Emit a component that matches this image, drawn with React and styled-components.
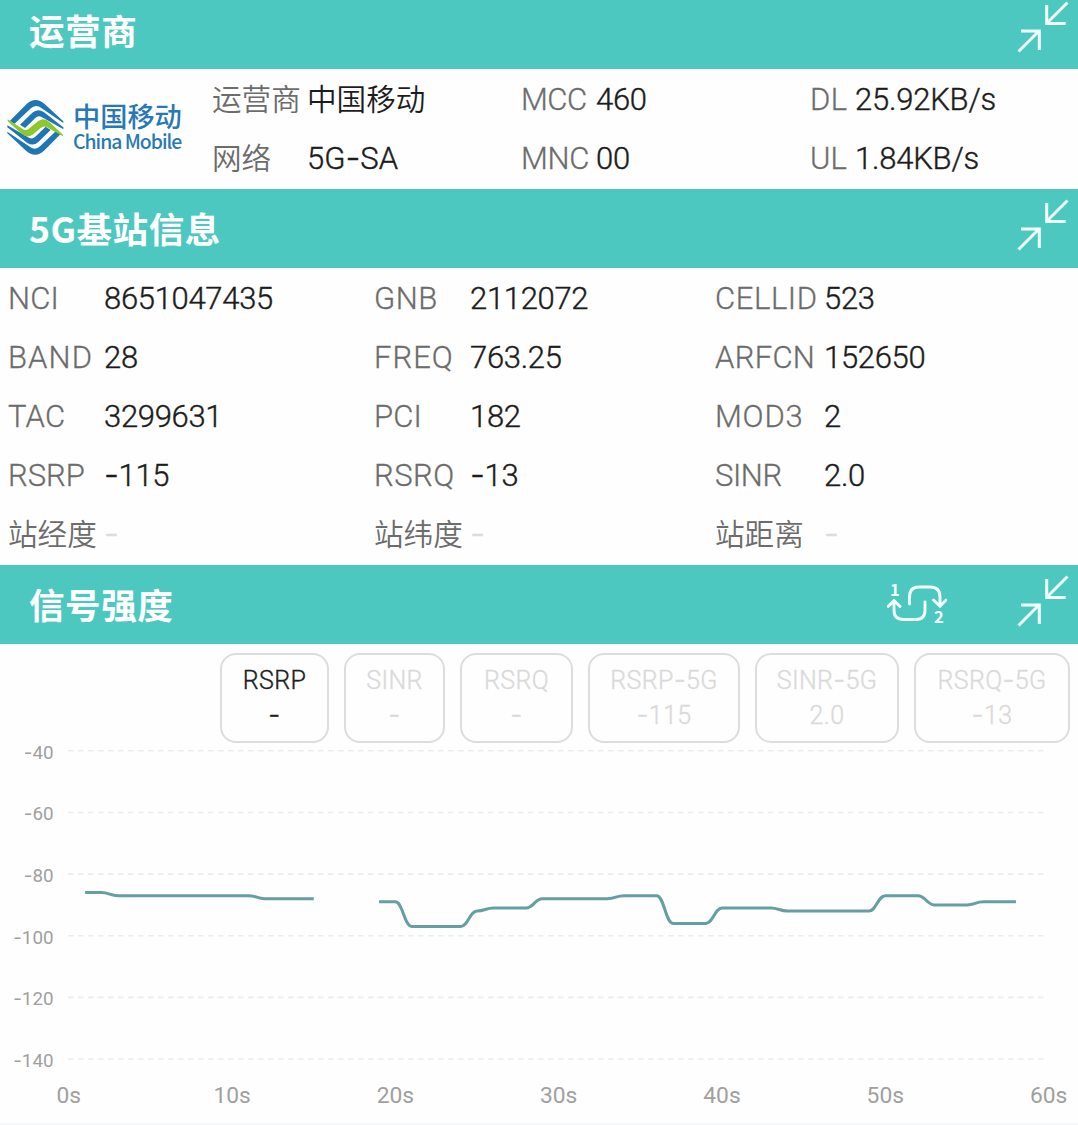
import React from "react";
import styled, { createGlobalStyle } from "styled-components";

const GlobalStyle = createGlobalStyle`
  * { box-sizing: border-box; }
  body {
    margin: 0;
    background: #fff;
    font-family: Roboto, "Noto Sans CJK SC", "Noto Sans", sans-serif;
    font-weight: 350;
    overflow: hidden;
  }
`;

const Page = styled.main`
  width: 1078px;
  height: 1125px;
  overflow: hidden;
  background: #fefefe;
`;

const Header = styled.header`
  display: flex;
  align-items: center;
  height: 78.5px;
  margin-top: ${(p) => (p.$cropped ? "-9.5px" : "0")};
  padding: 0 8px 0 29px;
  background: #4dc8c1;
  color: #fff;
`;

const Title = styled.h2`
  flex: 1;
  margin: 0;
  font-family: "Noto Sans CJK SC", sans-serif;
  font-size: 35.6px;
  line-height: 77px;
  height: 78px;
  font-weight: 700;
  letter-spacing: 0.5px;
`;

const IconButton = styled.button`
  display: flex;
  padding: 0 0 ${(p) => p.$lift}px;
  border: 0;
  background: none;
  color: #f2ffff;
  margin-left: ${(p) => p.$gap || 0}px;
`;

const CarrierPanel = styled.section`
  display: grid;
  grid-template-columns: 211px 309px 289px 1fr;
  height: 120px;
`;

const LogoBox = styled.div`
  display: flex;
  align-items: center;
  padding: 0 0 4px 4px;
`;

const LogoText = styled.div`
  display: flex;
  flex-direction: column;
  margin-left: 7px;
  padding-top: 3px;
  color: #2878b4;
  white-space: nowrap;
  font-family: "Noto Sans CJK SC", sans-serif;
`;

const LogoChinese = styled.span`
  font-size: 27.2px;
  line-height: 25px;
  font-weight: 500;
`;

const LogoEnglish = styled.span`
  font-size: 19.4px;
  line-height: 26px;
  font-weight: 500;
  letter-spacing: -1px;
`;

const Column = styled.dl`
  margin: 0;
`;

const Field = styled.div`
  display: flex;
  height: 59px;
  white-space: nowrap;
`;

const Label = styled.dt`
  width: ${(p) => p.$width}px;
  color: #6c6c6c;
  font-size: ${(p) => (p.$han ? 29.6 : 31)}px;
  line-height: ${(p) => (p.$han ? 62 : 61)}px;
  font-weight: 350;
  letter-spacing: ${(p) => p.$track}px;
  padding-left: 1px;
  -webkit-text-stroke: ${(p) => (p.$han ? 0 : 0.3)}px currentColor;
`;

const Value = styled.dd`
  margin: 0;
  color: ${(p) => (p.$muted ? "#dcdcdc" : "#1c1c1c")};
  font-size: ${(p) => (p.$han ? 29.6 : 31)}px;
  line-height: ${(p) => (p.$han ? 62 : 61)}px;
  font-weight: 350;
  letter-spacing: ${(p) => p.$track}px;
  -webkit-text-stroke: ${(p) => (p.$han ? 0 : 0.4)}px currentColor;
`;

const Dash = styled.span`
  font-family: Inter, sans-serif;
  font-size: 1.06em;
  line-height: 1;
  font-weight: 350;
`;

const CellPanel = styled.section`
  display: grid;
  grid-template-columns: 366px 341px 1fr;
  height: 297.5px;
  padding-left: 7px;
`;

const Metrics = styled.div`
  display: flex;
  justify-content: flex-end;
  gap: 15px;
  height: 99.5px;
  padding: 9.5px 8px 0 0;
`;

const Metric = styled.button`
  display: flex;
  flex-direction: column;
  align-items: center;
  width: ${(p) => p.$width}px;
  height: 90px;
  padding: 7.5px 0 0;
  border: 2px solid #dcdddd;
  border-radius: 16px;
  background: #fefefe;
  color: ${(p) => (p.$active ? "#202020" : "#dadada")};
  font-family: inherit;
  font-weight: 350;
  font-size: 25px;
  line-height: 35px;
  letter-spacing: 0.35px;
  white-space: nowrap;
  -webkit-text-stroke: 0.35px currentColor;
`;

const Chart = styled.svg`
  display: block;
  font-weight: 400;
  fill: #a0a0a0;
`;

function Dashed({ children }) {
  return children
    .split(/(-)/)
    .filter(Boolean)
    .map((part, i) => (part === "-" ? <Dash key={i}>-</Dash> : part));
}

const hasHan = (text) => /[\u4e00-\u9fff]/.test(text);

function Fields({ width, items }) {
  return (
    <Column>
      {items.map(([label, value, labelTrack = 0.5, valueTrack = -0.3]) => (
        <Field key={label}>
          <Label $width={width} $han={hasHan(label)} $track={hasHan(label) ? 0 : labelTrack}>
            {label}
          </Label>
          <Value $muted={value === "-"} $han={hasHan(value)} $track={hasHan(value) ? 0 : valueTrack}>
            <Dashed>{value}</Dashed>
          </Value>
        </Field>
      ))}
    </Column>
  );
}

function CollapseIcon() {
  return (
    <svg width="54" height="54" viewBox="0 0 54 54" fill="none" stroke="currentColor" strokeWidth="3">
      <path d="M51.5 2.5 31 23M30.7 5v18.5h19M2.5 51.5 23 31M5 31H23.3V50" />
    </svg>
  );
}

function SwapIcon() {
  return (
    <svg width="60" height="46" viewBox="0 -2 60 46" fill="none" stroke="currentColor" strokeWidth="2.9" strokeLinecap="round">
      <path d="M22.5 21V14Q22.5 4 32 4H43Q53 4 53 14V21M46.5 17 53 23.2 59 17" />
      <path d="M38 19V27Q38 36.5 29 36.5H16.5Q7 36.5 7 27V18M1.2 23.5 7 17.5 13 23.5" />
      <g fill="currentColor" stroke="none" fontFamily="Noto Sans CJK SC, sans-serif" fontWeight="700" fontSize="16.5">
        <text x="3" y="13">1</text>
        <text x="47" y="39.5">2</text>
      </g>
    </svg>
  );
}

function LogoMark() {
  const bands = (
    <>
      <path d="M18 74 68 24Q94 0 122 24L178 76V81L113 37Q95 22 79 38L31 84Z" />
      <path d="M48 86 85 50Q101 36 119 48L178 94V100L113 63Q103 57 94 66L63 96Z" />
    </>
  );
  return (
    <svg width="62" height="62" viewBox="0 0 186 186">
      <g fill="#1f76b5">
        {bands}
        <g transform="rotate(180 94 94)">{bands}</g>
      </g>
      <path
        fill="#8dc82b"
        d="M11 70 60 101Q69 105 78 95L103 75Q120 63 136 78L177 116V121L128 93Q119 88 109 97L88 115Q70 127 53 113L11 76Z"
      />
    </svg>
  );
}

function SectionHeader({ title, cropped, children }) {
  return (
    <Header $cropped={cropped}>
      <Title>{title}</Title>
      {children}
      <IconButton aria-label="收起" $gap={children ? 69 : 0} $lift={6}>
        <CollapseIcon />
      </IconButton>
    </Header>
  );
}

const carrier = [["运营商", "中国移动"], ["网络", "5G-SA", 0, 0]];
const codes = [["MCC", "460", -0.5], ["MNC", "00", -0.3]];
const rates = [["DL", "25.92KB/s", 0.4, -0.2], ["UL", "1.84KB/s", 0, -0.2]];

const cellColumns = [
  { width: 97, items: [["NCI", "8651047435", 0.2], ["BAND", "28", 1.1], ["TAC", "3299631", 0.2], ["RSRP", "-115", 0], ["站经度", "-"]] },
  { width: 97, items: [["GNB", "2112072"], ["FREQ", "763.25", 1], ["PCI", "182", 0.2], ["RSRQ", "-13", 0.5], ["站纬度", "-"]] },
  { width: 110, items: [["CELLID", "523", 0.6], ["ARFCN", "152650", 0.3], ["MOD3", "2", 0.8], ["SINR", "2.0", -0.4], ["站距离", "-"]] },
];

const metrics = [
  ["RSRP", "-", 109, true],
  ["SINR", "-", 101],
  ["RSRQ", "-", 113],
  ["RSRP-5G", "-115", 152],
  ["SINR-5G", "2.0", 144],
  ["RSRQ-5G", "-13", 156],
];

const CHART_TOP = 743;
const xAt = (s) => 68.8 + s * 16.33;
const yAt = (db) => 750.8 - CHART_TOP - (db + 40) * 3.082;

const segments = [
  [[1, -86], [2, -86], [3, -87], [11, -87], [12, -88], [15, -88]],
  [
    [19, -89], [20, -89], [21, -97], [24, -97], [25, -92], [26, -91], [28, -91], [29, -88],
    [33, -88], [34, -87], [36, -87], [37, -96], [39, -96], [40, -91], [43, -91], [44, -92],
    [49, -92], [50, -87], [52, -87], [53, -90], [55, -90], [56, -89], [58, -89],
  ],
];

function smoothPath(points) {
  return points
    .map(([s, db], i) => {
      const x = xAt(s);
      const y = yAt(db);
      if (i === 0) return `M${x} ${y}`;
      const px = xAt(points[i - 1][0]);
      const py = yAt(points[i - 1][1]);
      const dx = Math.min(x - px, 16.33) * 0.45;
      return `C${px + dx} ${py} ${x - dx} ${y} ${x} ${y}`;
    })
    .join("");
}

function SignalChart() {
  return (
    <Chart width="1078" height="382" viewBox="0 0 1078 382">
      {[-40, -60, -80, -100, -120, -140].map((db) => (
        <g key={db}>
          <line x1="68" x2="1045" y1={yAt(db)} y2={yAt(db)} stroke="#ececec" strokeWidth="1.6" strokeDasharray="5.5 4.5" />
          <text x="53.5" y={yAt(db) + 8} textAnchor="end" fontSize="18.8">
            <tspan fontFamily="Inter, sans-serif">-</tspan>
            {-db}
          </text>
        </g>
      ))}
      {[0, 10, 20, 30, 40, 50, 60].map((s) => (
        <text key={s} x={xAt(s)} y="360" textAnchor="middle" fontSize="22.8">{s}s</text>
      ))}
      {segments.map((points, i) => (
        <path key={i} d={smoothPath(points)} fill="none" stroke="#659fa3" strokeWidth="3" />
      ))}
      <line x1="0" x2="1078" y1="381" y2="381" stroke="#f1f6f6" strokeWidth="1.5" />
    </Chart>
  );
}

export default function App() {
  return (
    <Page>
      <GlobalStyle />
      <SectionHeader title="运营商" cropped />
      <CarrierPanel>
        <LogoBox>
          <LogoMark />
          <LogoText>
            <LogoChinese>中国移动</LogoChinese>
            <LogoEnglish>China Mobile</LogoEnglish>
          </LogoText>
        </LogoBox>
        <Fields width={96} items={carrier} />
        <Fields width={76} items={codes} />
        <Fields width={46} items={rates} />
      </CarrierPanel>
      <SectionHeader title="5G基站信息" />
      <CellPanel>
        {cellColumns.map((column, i) => (
          <Fields key={i} {...column} />
        ))}
      </CellPanel>
      <SectionHeader title="信号强度">
        <IconButton aria-label="切换" $lift={0}>
          <SwapIcon />
        </IconButton>
      </SectionHeader>
      <Metrics>
        {metrics.map(([name, value, width, active]) => (
          <Metric key={name} $width={width} $active={active}>
            <span><Dashed>{name}</Dashed></span>
            <span><Dashed>{value}</Dashed></span>
          </Metric>
        ))}
      </Metrics>
      <SignalChart />
    </Page>
  );
}
